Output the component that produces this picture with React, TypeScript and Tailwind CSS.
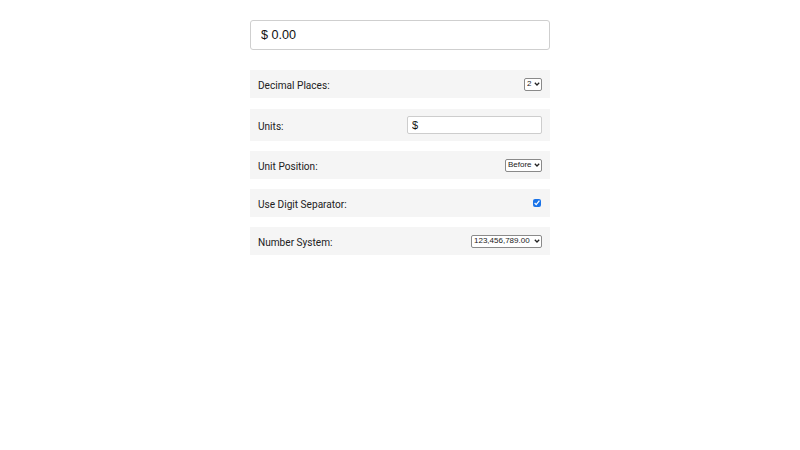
import { useState } from "react";

const Row = ({ label, children, tall }: { label: string; children: React.ReactNode; tall?: boolean }) => (
  <div className={`flex items-center justify-between bg-[#f5f5f5] pl-2 pr-2 ${tall ? "mt-px h-8" : "h-7"}`}>
    <span className="mt-[3px] font-['Roboto',sans-serif] text-[10.1px] text-[#222]">{label}</span>
    {children}
  </div>
);

const SmallSelect = ({
  value,
  onChange,
  options,
}: {
  value: string;
  onChange: (v: string) => void;
  options: { value: string; label: string }[];
}) => (
  <div className="flex h-[13px] items-center gap-[2px] rounded-[2px] border border-[#8a8a8a] bg-white pl-[2px] pr-[1px]">
    <select
      value={value}
      onChange={(e) => onChange(e.target.value)}
      className="appearance-none bg-transparent p-0 font-['Liberation_Sans',Arial,sans-serif] text-[8px] leading-none text-[#222] outline-none"
    >
      {options.map((o) => (
        <option key={o.value} value={o.value}>
          {o.label}
        </option>
      ))}
    </select>
    <svg width="6" height="4" viewBox="0 0 6 4" className="shrink-0">
      <path d="M0.8 0.8 L3 3 L5.2 0.8" fill="none" stroke="#222" strokeWidth="1.3" />
    </svg>
  </div>
);

const App = () => {
  const [decimals, setDecimals] = useState("2");
  const [units, setUnits] = useState("$");
  const [position, setPosition] = useState("before");
  const [separator, setSeparator] = useState(true);
  const [system, setSystem] = useState("intl");

  return (
    <div className="min-h-screen bg-white">
      <div className="mx-auto flex w-[300px] flex-col pt-5">
        <input
          readOnly
          value={`${units} 0.00`}
          className="h-[30px] rounded-[3px] border border-[#cfcfcf] px-[10px] font-['Liberation_Sans',Arial,sans-serif] text-[12.6px] text-[#111] outline-none"
        />

        <div className="mt-5 flex flex-col gap-[10px]">
          <Row label="Decimal Places:">
            <SmallSelect
              value={decimals}
              onChange={setDecimals}
              options={["0", "1", "2", "3", "4"].map((n) => ({ value: n, label: n }))}
            />
          </Row>

          <Row label="Units:" tall>
            <input
              value={units}
              onChange={(e) => setUnits(e.target.value)}
              className="h-[18px] w-[135px] rounded-[2px] border border-[#cdcdcd] bg-white px-[4px] font-['Liberation_Sans',Arial,sans-serif] text-[11px] text-[#111] outline-none"
            />
          </Row>

          <Row label="Unit Position:">
            <SmallSelect
              value={position}
              onChange={setPosition}
              options={[
                { value: "before", label: "Before" },
                { value: "after", label: "After" },
              ]}
            />
          </Row>

          <Row label="Use Digit Separator:">
            <input
              type="checkbox"
              checked={separator}
              onChange={(e) => setSeparator(e.target.checked)}
              className="m-0 mr-px h-[8px] w-[8px] accent-[#1a73e8]"
            />
          </Row>

          <Row label="Number System:">
            <SmallSelect
              value={system}
              onChange={setSystem}
              options={[
                { value: "intl", label: "123,456,789.00" },
                { value: "indian", label: "12,34,56,789.00" },
              ]}
            />
          </Row>
        </div>
      </div>
    </div>
  );
};

export default App;
